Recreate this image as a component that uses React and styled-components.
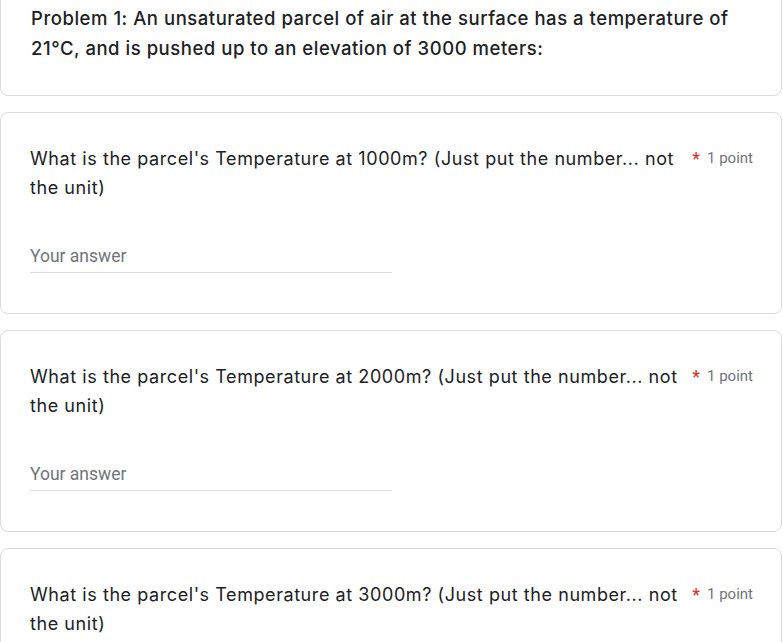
import React from "react";
import styled, { createGlobalStyle } from "styled-components";

const GlobalStyle = createGlobalStyle`
  body {
    margin: 0;
    background: #ffffff;
    font-family: Inter, "Open Sans", Arial, sans-serif;
    color: #202124;
  }
`;

const Page = styled.div`
  width: 782px;
  margin-top: -28px;
  display: flex;
  flex-direction: column;
  gap: 16px;
`;

const Card = styled.div`
  background: #ffffff;
  border: 1px solid #dadce0;
  border-radius: 8px;
  padding: ${(p) => (p.$header ? "30px 30px 32px 30px" : "31px 28px 40px 29px")};
`;

const Title = styled.div`
  font-family: Inter, sans-serif;
  font-size: 18.5px;
  font-weight: 500;
  line-height: 30px;
  letter-spacing: 0.53px;
  color: #202124;
`;

const QuestionRow = styled.div`
  display: flex;
  align-items: flex-start;
`;

const QuestionText = styled.div`
  flex: 1;
  font-family: Inter, sans-serif;
  font-size: 18px;
  line-height: 29px;
  letter-spacing: 0.57px;
  color: #202124;
`;

const Required = styled.span`
  color: #d93025;
  font-family: Roboto, sans-serif;
  font-size: 18px;
  line-height: 29px;
  margin-left: 14px;
`;

const Points = styled.span`
  font-family: Roboto, sans-serif;
  font-size: 15px;
  line-height: 29px;
  color: #70757a;
  margin-left: 7px;
  white-space: nowrap;
`;

const Answer = styled.div`
  margin-top: 43px;
  width: 362px;
  padding-bottom: 5px;
  border-bottom: 1px solid #dadce0;
  font-family: Roboto, sans-serif;
  font-size: 17.5px;
  line-height: 22px;
  color: #70757a;
`;

const questions = [1000, 2000, 3000];

export default function App() {
  return (
    <>
      <GlobalStyle />
      <Page>
        <Card $header>
          <Title>
            Problem 1: An unsaturated parcel of air at the surface has a temperature of
            21°C, and is pushed up to an elevation of 3000 meters:
          </Title>
        </Card>
        {questions.map((h) => (
          <Card key={h}>
            <QuestionRow>
              <QuestionText>
                What is the parcel's Temperature at {h}m? (Just put the number... not the unit)
              </QuestionText>
              <Required>*</Required>
              <Points>1 point</Points>
            </QuestionRow>
            <Answer>Your answer</Answer>
          </Card>
        ))}
      </Page>
    </>
  );
}
